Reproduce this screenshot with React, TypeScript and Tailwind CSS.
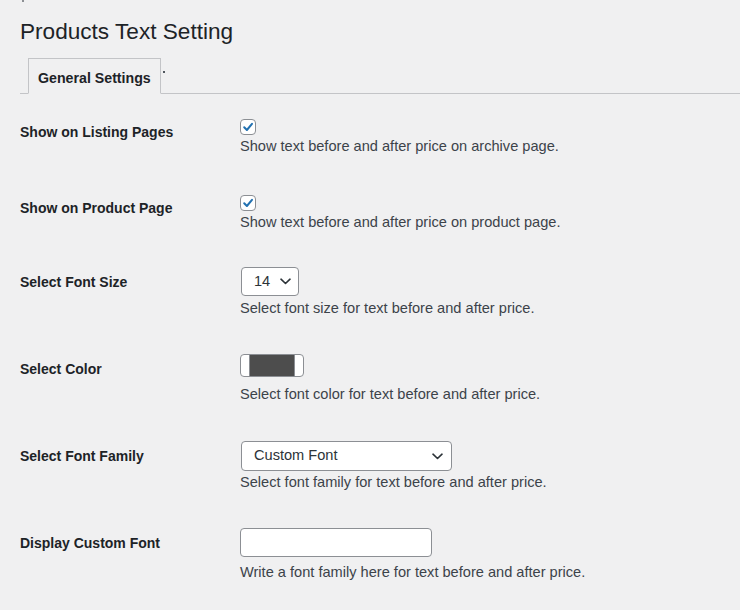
import type { ReactNode } from "react";

function Chevron() {
  return (
    <svg width="11" height="7" viewBox="0 0 11 7" fill="none" className="shrink-0">
      <path d="M1 1.2 L5.5 5.5 L10 1.2" stroke="#2c3338" strokeWidth="1.6" strokeLinecap="round" strokeLinejoin="round" />
    </svg>
  );
}

function Checkbox() {
  return (
    <div className="w-4 h-4 rounded-[4px] border border-[#8c8f94] bg-white flex items-center justify-center">
      <svg width="12" height="12" viewBox="0 0 12 12" fill="none">
        <path d="M2.2 6.2 L4.9 9 L10 2.8" stroke="#2271b1" strokeWidth="2" strokeLinecap="round" strokeLinejoin="round" />
      </svg>
    </div>
  );
}

function Desc({ children, className = "" }: { children: ReactNode; className?: string }) {
  return <p className={`text-[14.6px] leading-[21px] text-[#3c434a] ${className}`}>{children}</p>;
}

function Row({
  label,
  labelClass,
  className,
  children,
}: {
  label: string;
  labelClass: string;
  className: string;
  children: ReactNode;
}) {
  return (
    <div className={`flex ${className}`}>
      <div className={`w-[220px] shrink-0 text-[14px] leading-[21px] font-bold text-[#1d2327] ${labelClass}`}>
        {label}
      </div>
      <div className="flex flex-col items-start">{children}</div>
    </div>
  );
}

export default function App() {
  return (
    <div className="min-h-[610px] bg-[#f0f0f1] font-['Liberation_Sans',Arial,sans-serif] text-[#1d2327] overflow-hidden">
      {/* stray mark */}
      <div className="h-[2px] flex">
        <span className="ml-[22px] w-[2px] h-[2px] bg-[#8c8f94]" />
      </div>

      <h1 className="mt-[15px] pl-5 text-[22.6px] leading-[30px] font-normal text-[#1d2327]">Products Text Setting</h1>

      {/* Tabs */}
      <nav className="mt-[11px] ml-5 flex items-start border-b border-[#c3c4c7]">
        <div className="ml-2 -mb-px h-[36px] px-[9px] border border-[#c3c4c7] border-b-[#f0f0f1] bg-[#f0f0f1] flex items-center text-[14.2px] font-bold text-[#1d2327]">
          <span className="mt-[5px]">General Settings</span>
        </div>
        <span className="ml-[2px] mt-[13px] w-[2px] h-[2px] bg-[#50575e]" />
      </nav>

      <div className="px-5">
        <Row label="Show on Listing Pages" labelClass="pt-[3px]" className="mt-[25px]">
          <Checkbox />
          <Desc className="mt-px">Show text before and after price on archive page.</Desc>
        </Row>

        <Row label="Show on Product Page" labelClass="pt-[3px]" className="mt-[38px]">
          <Checkbox />
          <Desc className="mt-px">Show text before and after price on product page.</Desc>
        </Row>

        <Row label="Select Font Size" labelClass="pt-[5px]" className="mt-[34px]">
          <div className="ml-px h-[29px] w-[58px] rounded-[4px] border border-[#8c8f94] bg-white flex items-center justify-between pl-3 pr-[7px]">
            <span className="text-[14.6px] text-[#2c3338]">14</span>
            <Chevron />
          </div>
          <Desc className="mt-[2px]">Select font size for text before and after price.</Desc>
        </Row>

        <Row label="Select Color" labelClass="pt-[5px]" className="mt-[35px]">
          <div className="h-[23px] w-[64px] rounded-[4px] border border-[#8c8f94] bg-white flex overflow-hidden">
            <div className="w-[8px]" />
            <div className="flex-1 bg-[#4d4d4d] border-x border-[#8c8f94]" />
            <div className="w-[8px]" />
          </div>
          <Desc className="mt-[7px]">Select font color for text before and after price.</Desc>
        </Row>

        <Row label="Select Font Family" labelClass="pt-[5px]" className="mt-[36px]">
          <div className="ml-px h-[30px] w-[211px] rounded-[4px] border border-[#8c8f94] bg-white flex items-center justify-between pl-3 pr-[8px]">
            <span className="text-[14.6px] text-[#2c3338]">Custom Font</span>
            <Chevron />
          </div>
          <Desc className="mt-px">Select font family for text before and after price.</Desc>
        </Row>

        <Row label="Display Custom Font" labelClass="pt-[5px]" className="mt-[35px]">
          <input
            type="text"
            className="h-[29px] w-[192px] rounded-[4px] border border-[#8c8f94] bg-white outline-none"
          />
          <Desc className="mt-[5px]">Write a font family here for text before and after price.</Desc>
        </Row>
      </div>
    </div>
  );
}
